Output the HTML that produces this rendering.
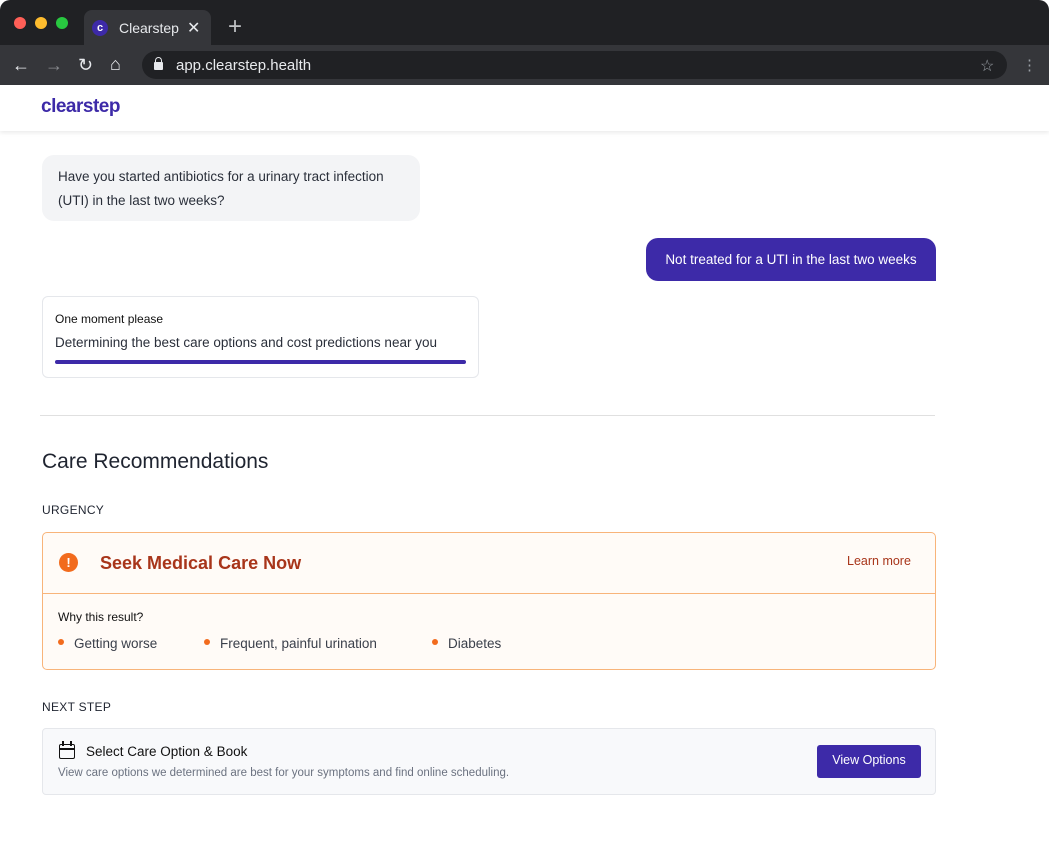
<!DOCTYPE html><html><head><style>
*{box-sizing:border-box;margin:0;padding:0}
body{width:1049px;height:857px;background:#fff;font-family:"Liberation Sans",sans-serif;position:relative;overflow:hidden;color:#1f2430}
.a{position:absolute}
.d{display:inline-block;width:6px;height:6px;border-radius:50%;background:#f26b1d;vertical-align:middle;margin-right:10px;position:relative;top:-2px}
</style></head><body>
<div class="a" style="left:0;top:0;width:1049px;height:46px;background:#202124;border-radius:10px 10px 0 0"></div>
<div class="a" style="left:14px;top:17px;width:12px;height:12px;border-radius:50%;background:#ff5f57"></div>
<div class="a" style="left:35px;top:17px;width:12px;height:12px;border-radius:50%;background:#febc2e"></div>
<div class="a" style="left:56px;top:17px;width:12px;height:12px;border-radius:50%;background:#28c840"></div>
<div class="a" style="left:84px;top:10px;width:127px;height:40px;background:#35363a;border-radius:8px 8px 0 0"></div>
<div class="a" style="left:92px;top:20px;width:16px;height:16px;border-radius:50%;background:#3d2aa8;color:#fff;font-size:11px;font-weight:bold;text-align:center;line-height:16px">c</div>
<div class="a" style="left:119px;top:20px;color:#e8eaed;font-size:14px">Clearstep</div>
<div class="a" style="left:187px;top:18px;color:#e8eaed;font-size:16px">✕</div>
<div class="a" style="left:228px;top:13px;color:#c0c2c5;font-size:24px">+</div>
<div class="a" style="left:0;top:45px;width:1049px;height:40px;background:#35363a"></div>
<div class="a" style="left:12px;top:55px;color:#e8eaed;font-size:18px">←</div>
<div class="a" style="left:45px;top:55px;color:#8a8c90;font-size:18px">→</div>
<div class="a" style="left:78px;top:55px;color:#e8eaed;font-size:18px">↻</div>
<div class="a" style="left:110px;top:54px;color:#e8eaed;font-size:18px">⌂</div>
<div class="a" style="left:142px;top:51px;width:865px;height:28px;background:#202124;border-radius:14px"></div>
<div class="a" style="left:154px;top:62px;width:9px;height:8px;background:#e8eaed;border-radius:1px"></div>
<div class="a" style="left:155px;top:57px;width:7px;height:7px;border:1.5px solid #e8eaed;border-bottom:none;border-radius:4px 4px 0 0"></div>
<div class="a" style="left:176px;top:57px;color:#e8eaed;font-size:15px">app.clearstep.health</div>
<div class="a" style="left:980px;top:56px;color:#9aa0a6;font-size:16px">☆</div>
<div class="a" style="left:1022px;top:56px;color:#9aa0a6;font-size:15px">⋮</div>
<div class="a" style="left:0;top:85px;width:1049px;height:46px;background:#fff;box-shadow:0 2px 4px rgba(0,0,0,.08)"></div>
<div class="a" style="left:41px;top:96px;color:#3d2aa8;font-size:19px;font-weight:bold;letter-spacing:-0.5px">clearstep</div>
<div class="a" style="left:42px;top:155px;width:378px;height:66px;background:#f3f4f6;border-radius:12px;padding:10px 16px;font-size:13.5px;line-height:24px;color:#2a2f3a">Have you started antibiotics for a urinary tract infection (UTI) in the last two weeks?</div>
<div class="a" style="left:646px;top:238px;width:290px;height:43px;background:#3d2aa8;border-radius:12px 12px 0 12px;color:#fff;font-size:13.5px;line-height:43px;text-align:center">Not treated for a UTI in the last two weeks</div>
<div class="a" style="left:42px;top:296px;width:437px;height:82px;border:1px solid #e5e7eb;border-radius:6px"></div>
<div class="a" style="left:55px;top:312px;font-size:12px;color:#111">One moment please</div>
<div class="a" style="left:55px;top:335px;font-size:13.5px;color:#2a2f3a">Determining the best care options and cost predictions near you</div>
<div class="a" style="left:55px;top:360px;width:411px;height:4px;background:#3d2aa8;border-radius:2px"></div>
<div class="a" style="left:40px;top:415px;width:895px;height:1px;background:#e0e0e0"></div>
<div class="a" style="left:42px;top:450px;font-size:21px;color:#1f2430">Care Recommendations</div>
<div class="a" style="left:42px;top:503px;font-size:12px;color:#1f2430;letter-spacing:.3px">URGENCY</div>
<div class="a" style="left:42px;top:532px;width:894px;height:138px;border:1px solid #f8b47a;border-radius:5px;background:#fffbf7"></div>
<div class="a" style="left:43px;top:593px;width:892px;height:1px;background:#f8b47a"></div>
<div class="a" style="left:59px;top:553px;width:19px;height:19px;border-radius:50%;background:#f26b1d;color:#fff;font-weight:bold;font-size:13px;text-align:center;line-height:19px">!</div>
<div class="a" style="left:100px;top:553px;font-size:18px;font-weight:bold;color:#a8351a">Seek Medical Care Now</div>
<div class="a" style="left:847px;top:554px;font-size:12.5px;color:#a8351a">Learn more</div>
<div class="a" style="left:58px;top:610px;font-size:12px;color:#111">Why this result?</div>
<div class="a" style="left:58px;top:636px;font-size:13.5px;color:#3a3f4a"><span class="d"></span>Getting worse</div>
<div class="a" style="left:204px;top:636px;font-size:13.5px;color:#3a3f4a"><span class="d"></span>Frequent, painful urination</div>
<div class="a" style="left:432px;top:636px;font-size:13.5px;color:#3a3f4a"><span class="d"></span>Diabetes</div>
<div class="a" style="left:42px;top:700px;font-size:12px;color:#1f2430;letter-spacing:.3px">NEXT STEP</div>
<div class="a" style="left:42px;top:728px;width:894px;height:67px;border:1px solid #e5e7eb;border-radius:4px;background:#f8f9fb"></div>
<div class="a" style="left:59px;top:744px;width:16px;height:15px;border:1.6px solid #111;border-radius:2px"></div>
<div class="a" style="left:59px;top:748px;width:16px;height:1.6px;background:#111"></div>
<div class="a" style="left:62px;top:741px;width:1.6px;height:5px;background:#111"></div>
<div class="a" style="left:70px;top:741px;width:1.6px;height:5px;background:#111"></div>
<div class="a" style="left:86px;top:744px;font-size:13.5px;color:#111">Select Care Option &amp; Book</div>
<div class="a" style="left:58px;top:767px;font-size:11.5px;color:#6b7280">View care options we determined are best for your symptoms and find online scheduling.</div>
<div class="a" style="left:817px;top:745px;width:104px;height:33px;background:#3d2aa8;border-radius:3px;color:#fff;font-size:12.5px;text-align:center;line-height:31px">View Options</div>
</body></html>
